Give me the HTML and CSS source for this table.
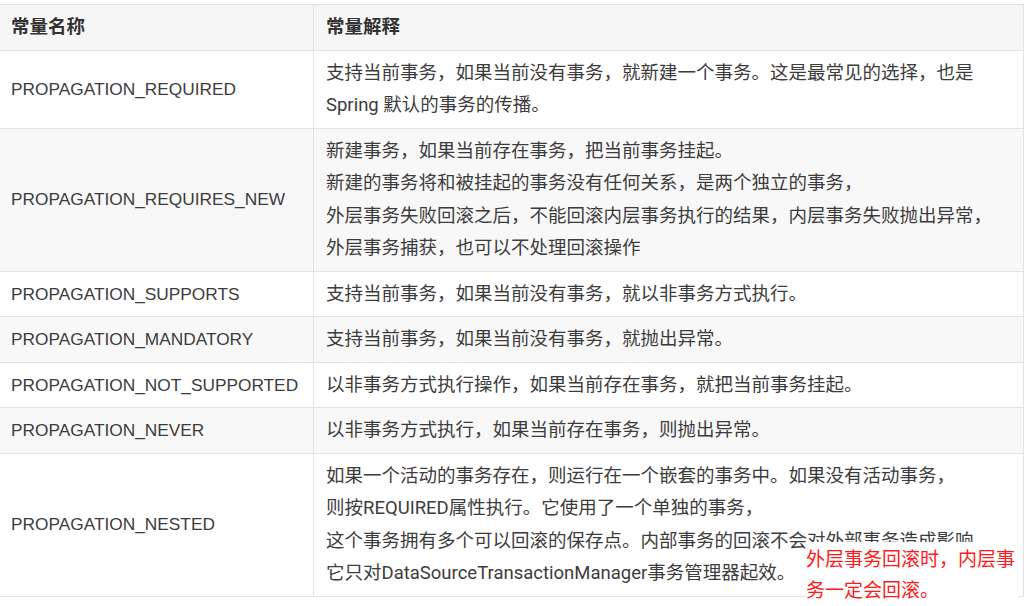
FILE: index.html
```html
<!DOCTYPE html>
<html lang="zh-CN">
<head>
<meta charset="utf-8">
<title>事务传播行为</title>
<link rel="stylesheet" href="styles.css">
</head>
<body>
<div class="page">
  <table class="prop-table">
    <thead>
      <tr><th class="col-name">常量名称</th><th>常量解释</th></tr>
    </thead>
    <tbody>
      <tr>
        <td class="col-name">PROPAGATION_REQUIRED</td>
        <td>支持当前事务，如果当前没有事务，就新建一个事务。这是最常见的选择，也是<br>Spring 默认的事务的传播。</td>
      </tr>
      <tr>
        <td class="col-name">PROPAGATION_REQUIRES_NEW</td>
        <td>新建事务，如果当前存在事务，把当前事务挂起。<br>新建的事务将和被挂起的事务没有任何关系，是两个独立的事务，<br>外层事务失败回滚之后，不能回滚内层事务执行的结果，内层事务失败抛出异常，<br>外层事务捕获，也可以不处理回滚操作</td>
      </tr>
      <tr>
        <td class="col-name">PROPAGATION_SUPPORTS</td>
        <td>支持当前事务，如果当前没有事务，就以非事务方式执行。</td>
      </tr>
      <tr>
        <td class="col-name">PROPAGATION_MANDATORY</td>
        <td>支持当前事务，如果当前没有事务，就抛出异常。</td>
      </tr>
      <tr>
        <td class="col-name">PROPAGATION_NOT_SUPPORTED</td>
        <td>以非事务方式执行操作，如果当前存在事务，就把当前事务挂起。</td>
      </tr>
      <tr>
        <td class="col-name">PROPAGATION_NEVER</td>
        <td>以非事务方式执行，如果当前存在事务，则抛出异常。</td>
      </tr>
      <tr>
        <td class="col-name">PROPAGATION_NESTED</td>
        <td>如果一个活动的事务存在，则运行在一个嵌套的事务中。如果没有活动事务，<br>则按REQUIRED属性执行。它使用了一个单独的事务，<br>这个事务拥有多个可以回滚的保存点。内部事务的回滚不会对外部事务造成影响。<br>它只对DataSourceTransactionManager事务管理器起效。</td>
      </tr>
    </tbody>
  </table>
  <div class="note">外层事务回滚时，内层事务一定会回滚。</div>
</div>
</body>
</html>
```

FILE: styles.css
```css
html, body {
  margin: 0;
  padding: 0;
  background: #ffffff;
}

.page {
  position: relative;
  padding-top: 4px;
  width: 1031px;
  height: 606px;
  box-sizing: border-box;
  overflow: hidden;
  background: #ffffff;
}

.prop-table {
  margin-left: -1px;
  width: 1025px;
  border-collapse: collapse;
  font-family: Roboto, "Noto Sans CJK SC", sans-serif;
  font-size: 18.5px;
  line-height: 32.5px;
  color: #3c3c3c;
}

.prop-table th,
.prop-table td {
  border: 1px solid #e3e3e3;
  padding: 6px 12px;
  text-align: left;
  vertical-align: middle;
}

.prop-table th {
  font-weight: bold;
  background: #f6f6f6;
  color: #333333;
}

.prop-table .col-name {
  width: 290px;
  padding-left: 11px;
  white-space: nowrap;
}

.prop-table td.col-name {
  font-family: "Liberation Sans", "Noto Sans CJK SC", sans-serif;
  font-size: 17.3px;
}

.prop-table tbody tr:nth-child(even) {
  background: #f8f8f8;
}

.note {
  position: absolute;
  left: 806px;
  top: 542px;
  width: 212px;
  background: #ffffff;
  color: #ff1a1a;
  font-family: "Noto Sans CJK SC", sans-serif;
  font-size: 19px;
  line-height: 31px;
}
```
